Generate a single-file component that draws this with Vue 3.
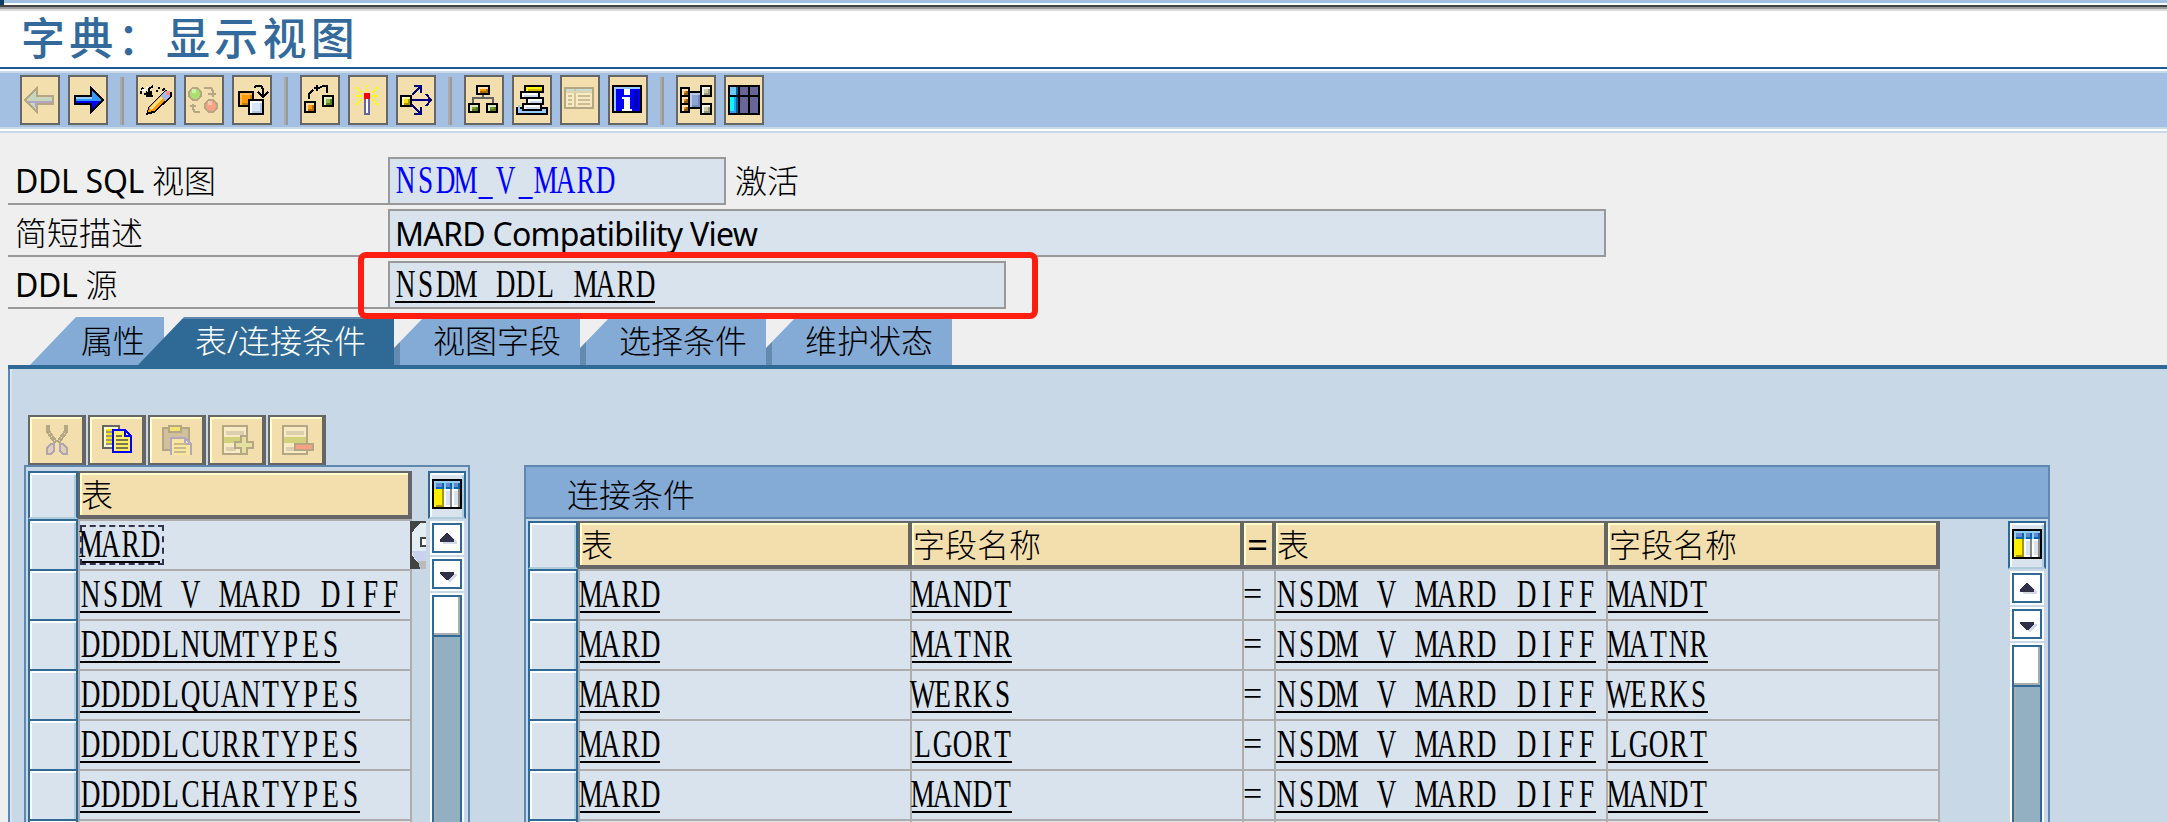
<script setup>
import { h } from 'vue'

/* ---- pixel icons: one unit is two screen pixels ---- */
const r = (x, y, w, hh, f) => `<rect x="${x}" y="${y}" width="${w}" height="${hh}" fill="${f}"/>`
const p = (d, s, f = 'none') => `<path d="${d}" stroke="${s}" fill="${f}" stroke-width="1"/>`
const box = (x, y, w, hh, f, hi, lo, line = '#000') =>
  r(x, y, w, hh, line) + r(x + 1, y + 1, w - 2, hh - 2, f) +
  r(x + 1, y + 1, w - 2, 1, hi) + r(x + 1, y + 1, 1, hh - 2, hi) +
  r(x + 2, y + hh - 2, w - 3, 1, lo) + r(x + w - 2, y + 2, 1, hh - 3, lo)

const D = '#b5a684'
const icons = {
  back: p('M2.5 12.5L8.5 6.5V10.5H16.5V14.5H8.5V18.5Z', D, '#c8d6bd') + r(4, 13, 12, 1, '#b0a5c5') + p('M4.5 13.5H8V16', '#b0a5c5'),
  forward: p('M3.5 10.5H11.5V6.5L17.5 12.5L11.5 18.5V14.5H3.5Z', '#000', '#39f') + r(4, 11, 8, 1, '#9cf') +
    '<path d="M4 13H17L12 17.500V14H4Z" fill="#00f"/>' + p('M17.500 12.500L11.500 18.500V14.500', '#000'),
  edit: p('M2.500 7.500L3.500 6.500M2.500 8V9.500M4 9.500H6.500V7L8.500 5.500M5 10.500H8.500M5 8.500L7.500 10.500M7.500 8V10', '#000') +
    p('M10.500 7.500V8.500M11 6.500H12M13 7.500L14.500 7', '#000') + r(3, 7, 2, 1, '#fff') + r(5, 6, 1, 1, '#fff') +
    '<path d="M5 20L6.500 15.500L14.500 7.500L18 8.500V11L9 19Z" fill="#000"/>' +
    '<path d="M6 18.500L6.800 16L14 8.800L16.500 11.200L9 18Z" fill="#ff9900"/>' +
    '<path d="M6.500 16.500L13.500 9.500L14.500 10.500L7.500 17.500Z" fill="#ffe08a"/>' +
    '<path d="M12 10.500L14.500 8L17 10.500L14.500 13Z" fill="#a9b6e8"/>' + r(15, 8, 2, 2, '#ff8f8f'),
  refresh: '<circle cx="5.500" cy="9.500" r="3" fill="#a9e06e" stroke="#b5a684"/><circle cx="13.500" cy="15.500" r="3" fill="#f8a184" stroke="#b5a684"/>' +
    r(4, 7, 2, 2, '#d0f0b0') + r(12, 13, 2, 2, '#fcc8b0') + p('M10 6.500H13.500L14.500 8V10.500M12 9.500H16', D) + r(14, 10, 1, 1, D) +
    p('M8 18.500H5.500L4.500 17V14.500M3 15.500H6', D),
  swap: box(3, 8, 8, 8, '#ff9900', '#ffb84d', '#cc7a00') + box(8, 12, 8, 8, '#d6e8f8', '#fff', '#b4c8e4') +
    p('M11 6.500L12 5.500H14.500L15.500 7V10.500M13 8.500L15.500 11L18 8.500', '#000'),
  where: box(2, 13, 6, 6, '#ff9900', '#ffe0a0', '#b36b00') + box(11, 10, 6, 6, '#8fb850', '#dff0c0', '#5b7a20') +
    p('M4.500 12V9.500L6.500 7.500M7 6.500H10M8.500 5V8M10 6L12 5.500M11 5.500H13.500V9', '#000'),
  wand: r(8, 12, 3, 8, '#669') + r(9, 12, 1, 7, '#fff') + r(8, 9, 3, 3, '#f00') +
    [[9, 5], [9, 7], [4, 6], [5, 7], [6, 8], [14, 6], [13, 7], [12, 8], [4, 10], [5, 10], [6, 10], [12, 10], [13, 10], [14, 10], [4, 14], [5, 13], [6, 12], [14, 14], [13, 13], [12, 12]]
      .map(([x, y]) => r(x, y, 1, 1, '#ff0')).join(''),
  spread: box(2, 10, 6, 6, '#fd0', '#ffffb0', '#aa9500') + p('M8 12.500H18M15 9.500L17.500 12.500L15 15.500M8 10L12.500 5.500M9 5.500H12.500V9M8 15L12.500 19.500M9 19.500H12.500V16', '#000080'),
  tree: p('M9.500 10V11.500M4.500 14V11.500H14.500V14', '#666') + box(6, 5, 7, 5, '#f90', '#ffe6b0', '#b36b00') +
    box(2, 14, 6, 5, '#7f9c30', '#dfe8c0', '#5b7a20') + box(11, 14, 6, 5, '#7f9c30', '#dfe8c0', '#5b7a20'),
  stack: r(2, 16, 16, 4, '#000') + r(3, 17, 14, 2, '#9cf') + r(3, 15, 1, 2, '#9cf') +
    box(5, 14, 10, 4, '#fff', '#fff', '#c9d9ee') + box(7, 11, 9, 4, '#fff', '#fff', '#c9d9ee') +
    box(4, 8, 10, 4, '#fff', '#fff', '#c9d9ee') + box(6, 5, 10, 4, '#ff0', '#ff0', '#d8b800'),
  list: box(2, 6, 15, 11, '#f8ebc4', '#f8ebc4', '#f5e6bd', D) + r(3, 7, 13, 1, '#c6ddd3') + r(7, 7, 1, 9, '#d3c59c') +
    [10, 12, 14].map((y) => r(4, y, 2, 1, '#cbbc94') + r(9, y, 6, 1, '#cbbc94')).join('') + r(3, 8, 13, 1, '#dfd3ae'),
  info: r(2, 5, 15, 14, '#000') + r(3, 6, 13, 12, '#00f') + r(3, 6, 13, 1, '#9cf') + r(3, 7, 1, 11, '#9cf') + r(13, 8, 2, 9, '#0000b8') +
    r(8, 7, 3, 3, '#fff') + r(7, 11, 4, 1, '#fff') + r(8, 12, 3, 5, '#fff') + r(7, 17, 5, 1, '#fff'),
  struct: [6, 10, 14].map((y) => box(2, y, 5, 5, '#e09020', '#ffe6b0', '#9a5a00')).join('') +
    box(6, 8, 7, 9, '#8fa4d4', '#b9c8ea', '#6f88bd') + box(12, 5, 6, 6, '#ccccaa', '#f5f5e0', '#999977') + box(12, 14, 6, 6, '#ccccaa', '#f5f5e0', '#999977'),
  content: r(2, 5, 16, 15, '#000') + r(3, 6, 4, 4, '#6cc8f8') + r(6, 6, 1, 4, '#069') + r(3, 11, 4, 8, '#39f') + r(3, 11, 2, 7, '#0ff') + r(6, 11, 1, 8, '#069') +
    r(8, 6, 4, 4, '#669') + r(13, 6, 4, 4, '#669') + r(8, 11, 4, 8, '#669') + r(13, 11, 4, 8, '#669'),
  cut: p('M9.500 5V8.500L13.500 14M10.500 5V8L14.500 13.500M19.500 5V8.500L15.500 14M18.500 5V8L14.500 13.500', D) +
    p('M11.500 14.500H13V18L11.500 19.500H9.500V16.500ZM17.500 14.500H16V18L17.500 19.500H19.500V16.500Z', '#b3a5b0', '#ded0bd'),
  copy: r(7, 5, 9, 12, '#666') + r(8, 6, 7, 10, '#ffffcc') + [7, 9, 11, 13].map((y) => r(9, y, 3, 1, '#ffe600')).join('') + [8, 10, 12, 14].map((y) => r(9, y, 3, 1, '#998')).join('') +
    '<path d="M12.500 7.500H18.500L21.500 10.500V18.500H12.500Z" fill="#ffef60" stroke="#00f"/>' + p('M18.500 8V10.500H21', '#00f') +
    [10, 12, 14, 16].map((y) => r(14, y, y < 11 ? 3 : 6, 1, '#777755')).join(''),
  paste: r(7, 6, 14, 12, D) + r(8, 7, 12, 10, '#d0c09c') + r(10, 5, 7, 4, D) + r(11, 6, 5, 2, '#f3e470') +
    '<path d="M11.500 20V11.500H18.500L21.500 14.500V20" fill="#f8e89c" stroke="#b3a5c5"/>' + p('M18.500 12V14.500H21', '#b3a5c5') + [14, 16, 18].map((y) => r(13, y, 6, 1, '#c8b98c')).join(''),
  insert: r(7, 5, 13, 15, D) + r(8, 6, 11, 13, '#f8ebc4') + r(9, 8, 9, 2, '#dccfae') + r(8, 11, 11, 3, '#d2d27c') + r(9, 16, 5, 2, '#dccfae') +
    '<path d="M16.500 10.500H19.500V13.500H22.500V16.500H19.500V19.500H16.500V16.500H13.500V13.500H16.500Z" fill="#e4e0a0" stroke="#b5a684"/>',
  remove: r(7, 5, 13, 15, D) + r(8, 6, 11, 13, '#f8ebc4') + r(9, 8, 9, 2, '#dccfae') + r(8, 11, 11, 3, '#d2d27c') + r(9, 16, 5, 2, '#dccfae') +
    r(13, 14, 10, 4, D) + r(14, 15, 8, 2, '#f9a184'),
  config: r(0, 0, 15, 15, '#000') + r(1, 1, 13, 1, '#8fcdf5') + r(1, 2, 13, 3, '#0066b3') + r(2, 2, 3, 2, '#6688cc') + r(7, 2, 2, 2, '#6688cc') + r(11, 2, 2, 2, '#6688cc') +
    r(1, 5, 5, 9, '#fe0') + r(5, 5, 1, 9, '#aa9500') + r(2, 13, 4, 1, '#aa9500') + r(1, 2, 1, 3, '#8fcdf5') +
    r(6, 5, 4, 9, '#fff') + r(10, 5, 4, 9, '#fff') + r(7, 6, 2, 7, '#d8e3ee') + r(9, 5, 1, 9, '#888') + r(11, 6, 2, 7, '#d8e3ee') + r(13, 5, 1, 9, '#888') + r(6, 2, 1, 3, '#8fcdf5') + r(10, 2, 1, 3, '#8fcdf5'),
  up: '<path d="M5 7L8.500 3.500L12 7V8H5Z" fill="#d0dcea" transform="translate(0.5 1)"/><path d="M4 8V7L7.500 3L11 7V8Z" fill="#303048" />',
  down: '<path d="M5 5H12V6L9 9H8Z" fill="#d0dcea" transform="translate(0.5 0.8)"/><path d="M4 5H11V6L8 9H7L4 6Z" fill="#303048"/>',
  grip: r(0, 0, 8, 24, '#444') + '<path d="M8 1H5L3 3L1 6V17L3 20L5 22L8 23Z" fill="#e2edf4"/><path d="M1 15H8V22H5L2 18Z" fill="#c6d2ee"/><path d="M4 20H8V24H5Z" fill="#bbb"/>' +
    p('M8 8.500H5.500V12.500H8', '#444', '#fff')
}

const toolbar = [
  ['back', 'forward'],
  ['edit', 'refresh', 'swap'],
  ['where', 'wand', 'spread'],
  ['tree', 'stack', 'list', 'info'],
  ['struct', 'content']
]
const tableTools = ['cut', 'copy', 'paste', 'insert', 'remove']

/* Technical names: condensed serif capitals, one per 20px cell */
const CELL = 20
const SQUEEZE = 0.69
const Code = ({ text }) => {
  const chars = [...text]
  const xs = chars.map((_, i) => ((i * CELL + CELL / 2 + 0.5) / SQUEEZE).toFixed(2)).join(' ')
  const ys = chars.map((c) => (c === '_' ? 27 : 26)).join(' ')
  return h('svg', { class: 'code', width: chars.length * CELL, height: 30 }, [
    h('text', { x: xs, y: ys, transform: `scale(${SQUEEZE} 1)`, 'font-size': 39.5, 'text-anchor': 'middle' }, text)
  ])
}
Code.props = ['text']

const tables = ['MARD', 'NSDM_V_MARD_DIFF', 'DDDDLNUMTYPES', 'DDDDLQUANTYPES', 'DDDDLCURRTYPES', 'DDDDLCHARTYPES']
const joins = ['MANDT', 'MATNR', 'WERKS', 'LGORT', 'MANDT']
const tabs = [
  { label: '属性', kind: 'first' },
  { label: '表/连接条件', kind: 'active' },
  { label: '视图字段', kind: 'plain' },
  { label: '选择条件', kind: 'plain' },
  { label: '维护状态', kind: 'plain' }
]
</script>

<template>
  <div class="window">
    <div class="strip"><i></i></div>
    <header class="title">字典：显示视图</header>
    <nav class="toolbar">
      <div v-for="(group, g) in toolbar" :key="g" class="group">
        <button v-for="name in group" :key="name" class="tool">
          <svg viewBox="1 1 18 23" width="36" height="46" v-html="icons[name]"></svg>
        </button>
      </div>
    </nav>

    <section class="form">
      <div class="row">
        <label><b>DDL SQL </b>视图</label>
        <div class="field w1 blue"><Code text="NSDM_V_MARD" /></div>
        <span class="status">激活</span>
      </div>
      <div class="row">
        <label>简短描述</label>
        <div class="field w2"><span class="desc">MARD Compatibility View</span></div>
      </div>
      <div class="row">
        <label><b>DDL </b>源</label>
        <div class="field w3"><Code text="NSDM_DDL_MARD" class="link" /></div>
      </div>
      <div class="marker"></div>
    </section>

    <div class="tabs">
      <div v-for="t in tabs" :key="t.label" class="tab" :class="t.kind"><span>{{ t.label }}</span></div>
    </div>

    <main class="panel">
      <section class="left">
        <div class="tabletools">
          <button v-for="n in tableTools" :key="n" class="tbtn">
            <svg viewBox="1 1 26 23" width="52" height="46" v-html="icons[n]"></svg>
          </button>
        </div>
        <div class="frame">
          <div class="grid g1">
            <div class="sel head"></div>
            <div class="th">表</div>
            <template v-for="(t, i) in tables" :key="t">
              <div class="sel"></div>
              <div class="td">
                <Code :text="t" class="link" />
                <template v-if="i === 0">
                  <span class="focus"></span>
                  <svg class="grip" viewBox="0 0 8 24" width="16" height="48" v-html="icons.grip"></svg>
                </template>
              </div>
            </template>
            <div class="sel"></div><div class="td"></div>
          </div>
          <div class="scroll">
            <div class="sel head cfg"><svg viewBox="0 0 15 15" width="30" height="30" v-html="icons.config"></svg></div>
            <div class="arrow"><svg viewBox="0 0 15 13" width="30" height="26" v-html="icons.up"></svg></div>
            <div class="arrow"><svg viewBox="0 0 15 13" width="30" height="26" v-html="icons.down"></svg></div>
            <div class="track"><div class="thumb"></div></div>
          </div>
        </div>
      </section>

      <section class="right">
        <h2>连接条件</h2>
        <div class="frame bare">
          <div class="grid g2">
            <div class="sel head"></div>
            <div class="th">表</div>
            <div class="th">字段名称</div>
            <div class="th eq">=</div>
            <div class="th">表</div>
            <div class="th">字段名称</div>
            <template v-for="(f, i) in joins" :key="i">
              <div class="sel"></div>
              <div class="td"><Code text="MARD" class="link" /></div>
              <div class="td"><Code :text="f" class="link" /></div>
              <div class="td eq">=</div>
              <div class="td"><Code text="NSDM_V_MARD_DIFF" class="link" /></div>
              <div class="td"><Code :text="f" class="link" /></div>
            </template>
            <div class="sel"></div><div v-for="n in 5" :key="n" class="td"></div>
          </div>
          <div class="scroll">
            <div class="sel head cfg"><svg viewBox="0 0 15 15" width="30" height="30" v-html="icons.config"></svg></div>
            <div class="arrow"><svg viewBox="0 0 15 13" width="30" height="26" v-html="icons.up"></svg></div>
            <div class="arrow"><svg viewBox="0 0 15 13" width="30" height="26" v-html="icons.down"></svg></div>
            <div class="track"><div class="thumb"></div></div>
          </div>
        </div>
      </section>
    </main>
  </div>
</template>

<style>
body { margin: 0; background: #efefef; }
</style>

<style scoped>
.window {
  width: 2167px; height: 822px; overflow: hidden; background: #efefef; color: #000;
  display: flex; flex-direction: column;
  font: 300 32px/1 "Noto Sans", "Noto Sans CJK SC", sans-serif;
}
.window * { box-sizing: border-box; }
svg { display: block; shape-rendering: crispEdges; flex: none; }
button { padding: 0; margin: 0; border-radius: 0; }
.strip { flex: none; height: 11px; background: linear-gradient(#a3c0e3 3px, #fff 3px 5px, #444 5px 7px, #999 7px 9px, #d9d9d9 9px); }
.strip i { display: block; width: 4px; height: 5px; background: #0b3f66; }
.title {
  flex: none; height: 58px; background: #fff; border-bottom: 2px solid #205a94; padding-left: 21px;
  font: 500 44px/51px "Noto Sans CJK SC", sans-serif; letter-spacing: 4.3px; color: #336a9b;
}
.toolbar {
  flex: none; height: 64px; display: flex; padding: 6px 0 0 20px;
  background: linear-gradient(#fff 2px, #c9d9e8 2px 4px, #a3bfe2 4px 58px, #c9d9e8 58px 60px, #fff 60px 62px, #c9d9e8 62px);
}
.group { display: flex; gap: 8px; height: 50px; }
.group + .group { margin-left: 12px; padding-left: 16px; background: linear-gradient(90deg, #aaa 2px, #999 2px 4px, transparent 4px) 0 2px / 100% 48px no-repeat; }
.tool { width: 40px; height: 50px; border: 2px solid #666; background: #f3dfae; }

.form { flex: none; height: 184px; padding: 24px 0 0 8px; display: flex; flex-direction: column; gap: 4px; position: relative; }
.row { display: flex; height: 48px; }
.row label { width: 380px; padding-left: 7px; border-bottom: 2px solid #999; line-height: 47px; white-space: pre; }
.row label b { font-weight: 400; letter-spacing: -0.3px; }
.field { border: 2px solid #999; background: #d8e3ee; padding: 8px 0 0 5px; }
.w1 { width: 338px; } .w2 { width: 1218px; } .w3 { width: 618px; }
.blue { color: #00f; }
.desc { display: block; line-height: 32px; font-weight: 400; white-space: nowrap; margin-top: -1px; letter-spacing: -0.72px; }
.status { padding-left: 9px; line-height: 47px; }
.marker { position: absolute; left: 358px; top: 119px; width: 680px; height: 67px; border: 6px solid #ff1e10; border-radius: 8px; z-index: 2; }

.code { display: block; overflow: visible; font-family: "Liberation Serif", serif; font-weight: 400; fill: currentColor; }
.link { height: 32px; border-bottom: 2px solid #000; }

.tabs { flex: none; height: 52px; margin-left: 8px; border-bottom: 4px solid #2f6a96; display: flex; }
.tab { height: 48px; line-height: 48px; white-space: nowrap; background: #83abd6; }
.first { width: 134px; margin-left: 22px; padding-left: 51px; clip-path: polygon(46px 0, 100% 0, 100% 100%, 0 100%); }
.active { width: 256px; margin-left: -26px; padding-left: 57px; background: linear-gradient(#6089b0 2px, #2f6a96 2px); color: #fff; clip-path: polygon(46px 0, 100% 0, 100% 100%, 0 100%); }
.plain { width: 186px; padding-left: 39px; background: linear-gradient(90deg, #648ab0 6px, #83abd6 6px); clip-path: polygon(30px 0, 100% 0, 100% 100%, 0 100%, 0 31px); }

.panel { flex: 1; margin-left: 8px; border-left: 2px solid #5f87b0; background: #c9d8e7; box-shadow: inset 2px 0 #d8e4f0; display: flex; align-items: flex-start; gap: 54px; padding-left: 14px; }
.left { padding-top: 46px; width: 446px; }
.tabletools { display: flex; gap: 2px; padding-left: 4px; }
.tbtn { width: 58px; height: 50px; border: solid #666; border-width: 2px 4px 2px 2px; background: #f3dfae; box-shadow: inset 2px 2px #ffffcc; }
.frame { border: 2px solid #5f87b0; padding: 4px 2px; height: 400px; display: flex; justify-content: space-between; }
.bare { border-top: 0; padding-top: 2px; }
.right { margin-top: 96px; width: 1526px; }
h2 { margin: 0; height: 54px; border: 2px solid #5f87b0; background: #83abd6; padding-left: 41px; font-size: 32px; font-weight: 300; line-height: 55px; }

.grid { display: grid; grid-auto-rows: 50px; grid-template-rows: 48px; align-content: start; height: fit-content; }
.g1 { grid-template-columns: 50px 334px; }
.g2 { grid-template-columns: 50px 334px 332px 32px 332px 332px; }
.sel { border: 2px solid #2f6a96; border-bottom: 0; background: #d8e3ee; box-shadow: inset 2px 2px #fff, inset -2px 0 #b0cbd9; }
.sel.head { border-bottom: 2px solid #b0cbd9; }
.th { border: solid #666; border-width: 2px 4px 4px 0; background: #f3dfae; box-shadow: inset 2px 2px #ffffcc; line-height: 44px; padding-left: 1px; white-space: nowrap; }
.sel + .th { border-left-width: 2px; }
.td { border-top: 2px solid #adadad; border-right: 2px solid #adadad; background: #d8e3ee; padding-top: 10px; position: relative; }
.sel + .td { border-left: 2px solid #adadad; }
.th.eq { padding-left: 3px; font-weight: 400; font-size: 37px; line-height: 42px; }
.td.eq { padding: 0; font: 400 34px/46px "Liberation Serif", serif; text-indent: -1px; }
.focus { position: absolute; left: 0; top: 4px; width: 84px; height: 40px; border: 2px dashed #33334d; }
.grip { position: absolute; left: 330px; top: 0; }

.scroll { width: 38px; height: 420px; display: flex; flex-direction: column; align-items: center; gap: 2px; }
.cfg { width: 38px; height: 48px; flex: none; padding: 6px 0 0 2px; }
.arrow { width: 30px; height: 30px; flex: none; margin: 2px; border: 2px solid #2f6a96; background: #fff; box-shadow: 0 0 0 2px #fff; }
.arrow svg { margin: 1px 0 0 -2px; }
.track { width: 30px; flex: 1; margin-top: 2px; border: 2px solid #2f6a96; box-shadow: 0 0 0 2px #fff; background: linear-gradient(90deg, #adadad 2px, #93afc2 2px); }
.thumb { height: 40px; background: #fff; border-bottom: 2px solid #2f6a96; box-shadow: inset -2px -2px #adadad; }
</style>
